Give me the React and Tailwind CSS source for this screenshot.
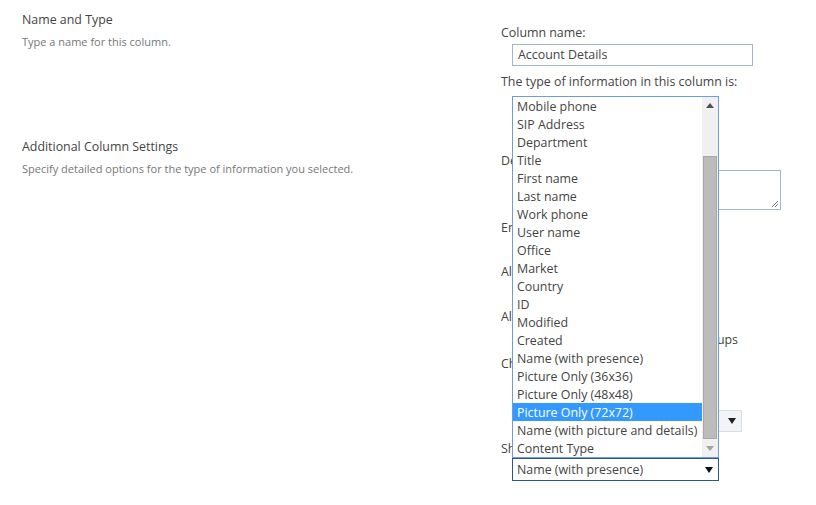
import React from 'react';

const FONT = { fontFamily: '"Open Sans", "Noto Sans", sans-serif' };

const options = [
  'Mobile phone',
  'SIP Address',
  'Department',
  'Title',
  'First name',
  'Last name',
  'Work phone',
  'User name',
  'Office',
  'Market',
  'Country',
  'ID',
  'Modified',
  'Created',
  'Name (with presence)',
  'Picture Only (36x36)',
  'Picture Only (48x48)',
  'Picture Only (72x72)',
  'Name (with picture and details)',
  'Content Type',
];

const Section = ({ title, desc, className }) => (
  <div className={className}>
    <h2 className="pt-[1px] text-[12.4px] leading-[17px] text-[#444]">{title}</h2>
    <p className="mt-[7px] text-[11px] leading-[14px] text-[#777]">{desc}</p>
  </div>
);

const Label = ({ children, className }) => (
  <div className={'text-[12.4px] leading-[17px] text-[#444] ' + (className || '')}>{children}</div>
);

const FieldListbox = () => (
  <div className="absolute left-[11px] top-0 z-10 flex h-[362px] w-[207px] border border-[#6f9be0] bg-white">
    <ul className="min-w-0 flex-1 overflow-hidden">
      {options.map((o) => (
        <li
          key={o}
          className={
            'h-[18px] pl-[4px] pt-[1px] text-[12.4px] leading-[17px] whitespace-nowrap ' +
            (o === 'Picture Only (72x72)' ? 'bg-[#3399ff] text-white' : 'text-[#444]')
          }
        >
          {o}
        </li>
      ))}
    </ul>
    <div className="flex w-[16px] shrink-0 flex-col bg-[#f0f0f0]">
      <div className="flex h-[17px] items-center justify-center">
        <svg width="8" height="5" viewBox="0 0 8 5">
          <path d="M0 5 L4 0 L8 5 Z" fill="#505050" />
        </svg>
      </div>
      <div className="h-[42px]" />
      <div className="mx-[1px] h-[283px] border border-[#a8a8a8] bg-[#bcbcbc]" />
      <div className="flex flex-1 items-center justify-center">
        <svg width="8" height="5" viewBox="0 0 8 5">
          <path d="M0 0 L8 0 L4 5 Z" fill="#a3a3a3" />
        </svg>
      </div>
    </div>
  </div>
);

export default function App() {
  return (
    <div className="flex h-[505px] w-[816px] bg-white" style={FONT}>
      <div className="w-[501px] pl-[22px] pt-[10px]">
        <Section title="Name and Type" desc="Type a name for this column." />
        <Section
          className="mt-[88px]"
          title="Additional Column Settings"
          desc="Specify detailed options for the type of information you selected."
        />
      </div>

      <div className="flex-1 pt-[23px]">
        <Label className="pt-[1px]">Column name:</Label>
        <div className="ml-[11px] mt-[3px] flex h-[22px] w-[241px] items-center border border-[#a6b5c5] pl-[5px] pt-[1px] text-[12.4px] text-[#444]">
          Account Details
        </div>
        <Label className="mt-[6px] pt-[1px]">The type of information in this column is:</Label>

        <div className="relative mt-[6px] pt-[55px]">
          <FieldListbox />

          <Label className="pt-[1px]">Description:</Label>
          <div className="relative ml-[11px] mt-[1px] h-[40px] w-[269px] border border-[#a6b5c5]">
            <svg className="absolute bottom-[1px] right-[1px]" width="8" height="8" viewBox="0 0 8 8">
              <path d="M7 1 L1 7 M7 4 L4 7" stroke="#777" strokeWidth="1" />
            </svg>
          </div>
          <Label className="mt-[8px] pt-[1px]">Enforce unique values:</Label>
          <Label className="mt-[26px] pt-[1px]">Allow multiple values:</Label>
          <Label className="mt-[27px] pt-[1px]">Allow selection of:</Label>
          <div className="ml-[11px] mt-[5px] flex pt-[1px] text-[12.4px] leading-[17px] text-[#444]">
            <span>People Only</span>
            <span className="ml-[46px]">People and Groups</span>
          </div>
          <Label className="mt-[6px] pt-[1px]">Choose from:</Label>
          <div className="ml-[11px] mt-[38px] flex h-[22px] w-[230px] items-center justify-end border border-[#d8dde2] bg-[#f3f4f6] pr-[5px]">
            <svg width="8" height="6" viewBox="0 0 8 6">
              <path d="M0 0 L8 0 L4 6 Z" fill="#222" />
            </svg>
          </div>
          <Label className="mt-[7px] pt-[1px]">Show field:</Label>
          <div className="ml-[11px] mt-[1px] flex h-[23px] w-[207px] items-center justify-between border border-[#2a5697] pl-[4px] pr-[5px] pt-[1px] text-[12.4px] text-[#444]">
            <span>Name (with presence)</span>
            <svg width="8" height="6" viewBox="0 0 8 6">
              <path d="M0 0 L8 0 L4 6 Z" fill="#111" />
            </svg>
          </div>
        </div>
      </div>
    </div>
  );
}
